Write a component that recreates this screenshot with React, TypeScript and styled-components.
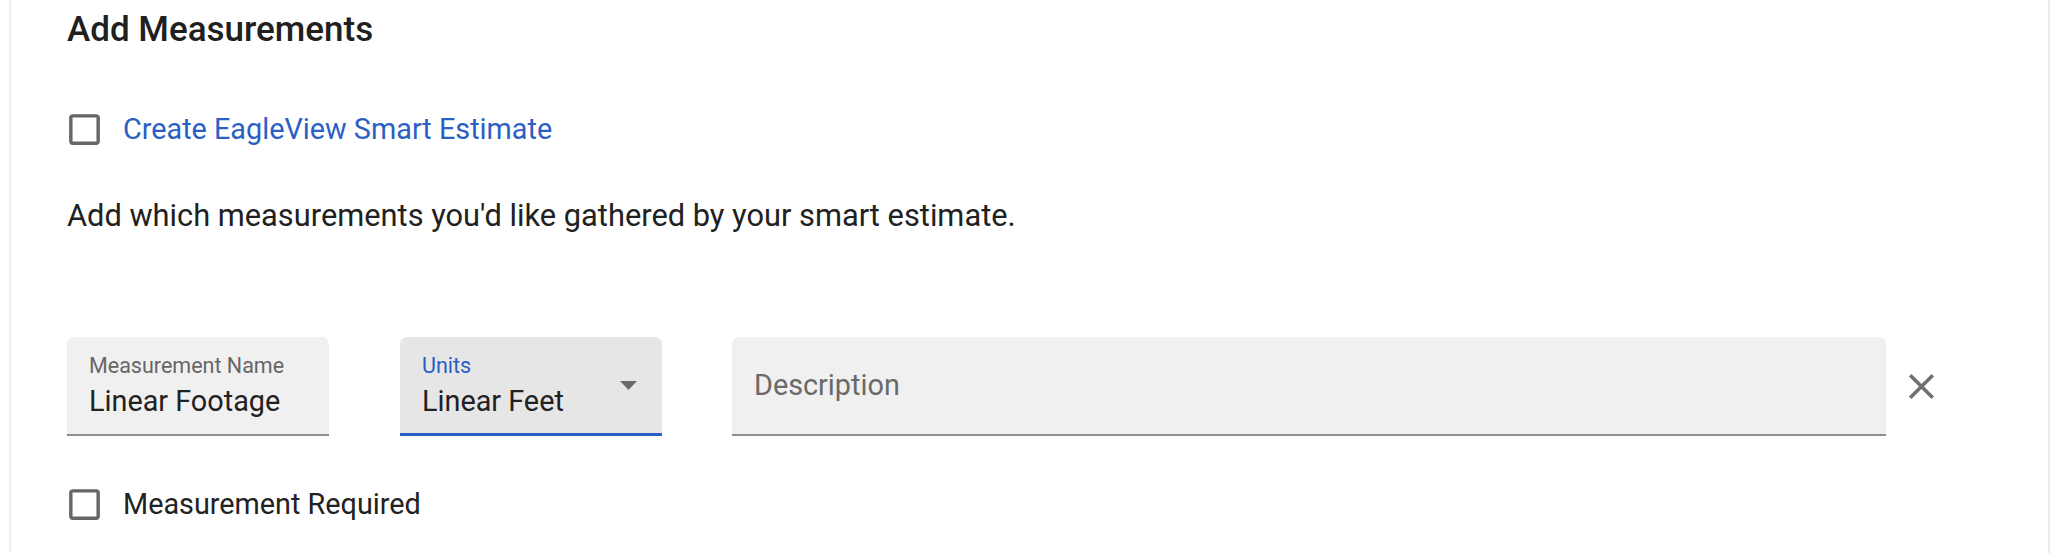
import React from "react";
import styled, { createGlobalStyle } from "styled-components";

const Global = createGlobalStyle`
  html, body { margin: 0; padding: 0; background: #ffffff; }
  body { font-family: Roboto, "Liberation Sans", Arial, sans-serif; color: #212121; }
  * { box-sizing: border-box; }
`;

const Page = styled.div`
  padding: 0 14px 0 9px;
  height: 553px;
  overflow: hidden;
`;

const Card = styled.section`
  border-left: 2px solid #efefef;
  border-right: 2px solid #ebebeb;
  height: 100%;
  padding: 9px 105px 0 56px;
  display: flex;
  flex-direction: column;
`;

const Title = styled.h2`
  margin: 0;
  font-size: 35px;
  line-height: 42px;
  font-weight: 500;
  color: #202020;
  letter-spacing: 0;
`;

const CheckRow = styled.label<{ $top: number }>`
  display: flex;
  align-items: center;
  gap: 18px;
  margin-top: ${(p) => p.$top}px;
  margin-left: -3px;
  height: 43px;
  cursor: pointer;
`;

const CheckText = styled.span<{ $link?: boolean }>`
  font-size: 28.8px;
  line-height: 43px;
  color: ${(p) => (p.$link ? "#2b5fc4" : "#222222")};
`;

const Help = styled.p`
  margin: 42px 0 0;
  font-size: 30.8px;
  line-height: 46px;
  color: #212121;
`;

const FieldRow = styled.div`
  display: flex;
  align-items: center;
  margin-top: 98px;
`;

const Field = styled.div<{ $width?: number; $focused?: boolean; $grow?: boolean }>`
  height: 99px;
  ${(p) => (p.$grow ? "flex: 1;" : `width: ${p.$width}px; flex: none;`)}
  background: ${(p) => (p.$focused ? "#e6e6e6" : "#f0f0f0")};
  border-radius: 7px 7px 0 0;
  border-bottom: ${(p) => (p.$focused ? "3px solid #2b5fc4" : "2px solid #8e8e8e")};
  padding: 0 25px 0 22px;
  display: flex;
  align-items: center;
  justify-content: space-between;
`;

const FieldBody = styled.div`
  display: flex;
  flex-direction: column;
  align-self: flex-start;
  padding-top: 18px;
`;

const FieldLabel = styled.span<{ $focused?: boolean }>`
  font-size: 21.5px;
  line-height: 21.5px;
  color: ${(p) => (p.$focused ? "#2b5fc4" : "#666666")};
`;

const FieldValue = styled.span`
  margin-top: 10px;
  font-size: 28.8px;
  line-height: 28.8px;
  color: #212121;
  white-space: nowrap;
`;

const Placeholder = styled.span`
  font-size: 28.8px;
  line-height: 34px;
  color: #6a6a6a;
  margin-bottom: 2px;
`;

const Gap = styled.div<{ $w: number }>`
  width: ${(p) => p.$w}px;
  flex: none;
`;

const IconButton = styled.button`
  flex: none;
  width: 43px;
  height: 43px;
  margin-left: 14px;
  padding: 0;
  border: none;
  background: transparent;
  display: flex;
  align-items: center;
  justify-content: center;
  cursor: pointer;
`;

const BoxIcon = () => (
  <svg width="41" height="41" viewBox="0 0 24 24" fill="#666666">
    <path d="M19 5v14H5V5h14m0-2H5c-1.11 0-2 .9-2 2v14c0 1.1.89 2 2 2h14c1.1 0 2-.9 2-2V5c0-1.1-.9-2-2-2z" />
  </svg>
);

const DropArrow = () => (
  <svg width="17" height="9" viewBox="0 0 17 9">
    <polygon points="0,0 17,0 8.5,9" fill="#6b6b6b" />
  </svg>
);

const CloseIcon = () => (
  <svg width="43" height="43" viewBox="0 0 24 24" fill="#707070">
    <path d="M19 6.41 17.59 5 12 10.59 6.41 5 5 6.41 10.59 12 5 17.59 6.41 19 12 13.41 17.59 19 19 17.59 13.41 12z" />
  </svg>
);

export default function App() {
  return (
    <>
      <Global />
      <Page>
        <Card>
          <Title>Add Measurements</Title>
          <CheckRow $top={57}>
            <BoxIcon />
            <CheckText $link>Create EagleView Smart Estimate</CheckText>
          </CheckRow>
          <Help>Add which measurements you'd like gathered by your smart estimate.</Help>
          <FieldRow>
            <Field $width={262}>
              <FieldBody>
                <FieldLabel>Measurement Name</FieldLabel>
                <FieldValue>Linear Footage</FieldValue>
              </FieldBody>
            </Field>
            <Gap $w={71} />
            <Field $width={262} $focused>
              <FieldBody>
                <FieldLabel $focused>Units</FieldLabel>
                <FieldValue>Linear Feet</FieldValue>
              </FieldBody>
              <DropArrow />
            </Field>
            <Gap $w={70} />
            <Field $grow>
              <Placeholder>Description</Placeholder>
            </Field>
            <IconButton aria-label="Remove">
              <CloseIcon />
            </IconButton>
          </FieldRow>
          <CheckRow $top={47}>
            <BoxIcon />
            <CheckText>Measurement Required</CheckText>
          </CheckRow>
        </Card>
      </Page>
    </>
  );
}
